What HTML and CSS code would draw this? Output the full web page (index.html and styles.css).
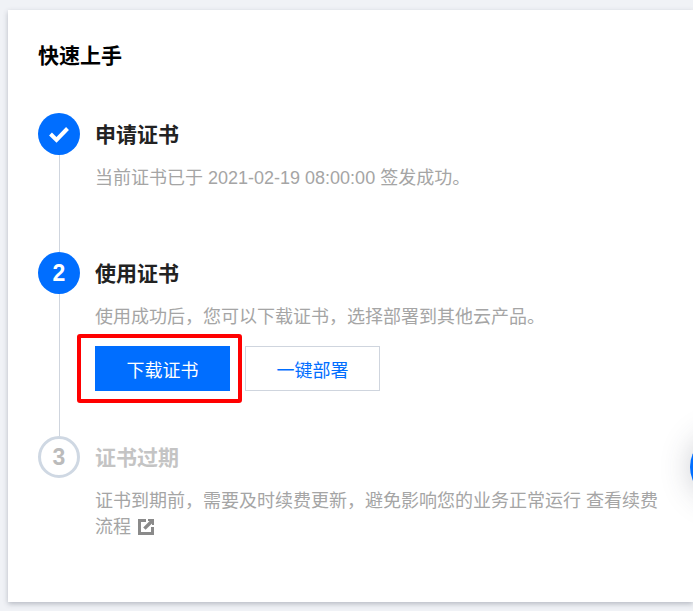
FILE: index.html
```html
<!DOCTYPE html>
<html lang="zh-CN">
<head>
    <meta charset="UTF-8">
    <meta name="viewport" content="width=device-width, initial-scale=1.0">
    <title>快速上手</title>
    <link rel="stylesheet" href="styles.css">
</head>
<body>
    <div class="card">
        <h2 class="card-title">快速上手</h2>

        <div class="step step-first">
            <div class="rail">
                <div class="dot dot-active">
                    <svg class="check" viewBox="0 0 22 18" width="22" height="18">
                        <path d="M2.5 9 L8.5 15 L19.5 3.5" fill="none" stroke="#fff" stroke-width="4"/>
                    </svg>
                </div>
                <div class="line"></div>
            </div>
            <div class="body">
                <h3 class="step-title">申请证书</h3>
                <p class="step-desc">当前证书已于 2021-02-19 08:00:00 签发成功。</p>
            </div>
        </div>

        <div class="step step-second">
            <div class="rail">
                <div class="dot dot-active">2</div>
                <div class="line"></div>
            </div>
            <div class="body">
                <h3 class="step-title">使用证书</h3>
                <p class="step-desc">使用成功后，您可以下载证书，选择部署到其他云产品。</p>
                <div class="actions">
                    <button class="btn btn-primary">下载证书<span class="mark"></span></button>
                    <button class="btn btn-default">一键部署</button>
                </div>
            </div>
        </div>

        <div class="step">
            <div class="rail">
                <div class="dot dot-todo">3</div>
            </div>
            <div class="body">
                <h3 class="step-title step-title-todo">证书过期</h3>
                <p class="step-desc">证书到期前，需要及时续费更新，避免影响您的业务正常运行 查看续费流程
                    <svg class="ext" viewBox="0 0 16 16" width="16" height="16">
                        <path d="M0 0 H8 V3 H3 V13 H13 V8 H16 V16 H0 Z" fill="#8a8a8a"/>
                        <path d="M10 0 H16 V6 L14 6 L14 4.4 L7.6 10.8 L5.2 8.4 L11.6 2 L10 2 Z" fill="#8a8a8a"/>
                    </svg>
                </p>
            </div>
        </div>
    </div>

    <!-- floating button, cut off by the window edge -->
    <div class="float-clip">
        <div class="float-btn"></div>
    </div>
</body>
</html>
```

FILE: styles.css
```css
html, body {
    height: 100%;
}
body {
    margin: 0;
    padding: 10px 0 9px 8px;
    box-sizing: border-box;
    overflow: hidden;
    background: #f0f2f6;
    font-family: "Liberation Sans", "Noto Sans CJK SC", sans-serif;
}
.card {
    height: 592px;
    box-sizing: border-box;
    padding: 30px 30px 0;
    background: #fff;
    box-shadow: 0 2px 5px rgba(54, 58, 80, 0.3);
}
.card-title {
    margin: 0 0 41px;
    font-size: 21px;
    line-height: 32px;
    font-weight: bold;
    color: #000;
}
.step {
    display: flex;
}
.step-first {
    height: 139px;
}
.step-second {
    height: 184px;
}
.rail {
    display: flex;
    flex-direction: column;
    align-items: center;
    width: 42px;
    margin-right: 15px;
    flex-shrink: 0;
}
.line {
    flex: 1;
    width: 1px;
    background: #cfd5de;
}
.dot {
    display: flex;
    align-items: center;
    justify-content: center;
    width: 42px;
    height: 42px;
    box-sizing: border-box;
    border-radius: 50%;
    font-size: 23px;
    font-weight: bold;
    flex-shrink: 0;
}
.dot-active {
    background: #006eff;
    color: #fff;
}
.dot-todo {
    border: 3px solid #cfd8e3;
    color: #bbb;
}
.body {
    flex: 1;
    min-width: 0;
}
.step-title {
    margin: 6px 0 14px;
    font-size: 21px;
    line-height: 32px;
    font-weight: bold;
    color: #222;
}
.step-title-todo {
    color: #c4c4c4;
}
.step-desc {
    margin: 0;
    font-size: 18px;
    line-height: 26px;
    color: #a5a5a5;
}
.ext {
    vertical-align: -2px;
    margin-left: 2px;
}
.actions {
    display: flex;
    gap: 15px;
    margin-top: 16px;
}
.btn {
    position: relative;
    width: 135px;
    height: 45px;
    padding: 0;
    border: 1px solid #cfd5de;
    border-radius: 0;
    font-family: inherit;
    font-size: 18px;
    background: #fff;
}
.btn-primary {
    border-color: #006eff;
    background: #006eff;
    color: #fff;
}
.btn-default {
    color: #006eff;
}
.mark {
    position: absolute;
    left: -19px;
    top: -13px;
    width: 165px;
    height: 69px;
    box-sizing: border-box;
    border: 4px solid #f00;
    border-radius: 3px;
}
.float-clip {
    position: absolute;
    right: 0;
    top: 400px;
    width: 63px;
    height: 134px;
    overflow: hidden;
}
.float-btn {
    width: 66px;
    height: 66px;
    margin: 34px 0 0 60px;
    border-radius: 50%;
    background: #006eff;
    box-shadow: 0 0 30px rgba(54, 58, 80, 0.25);
}
```
